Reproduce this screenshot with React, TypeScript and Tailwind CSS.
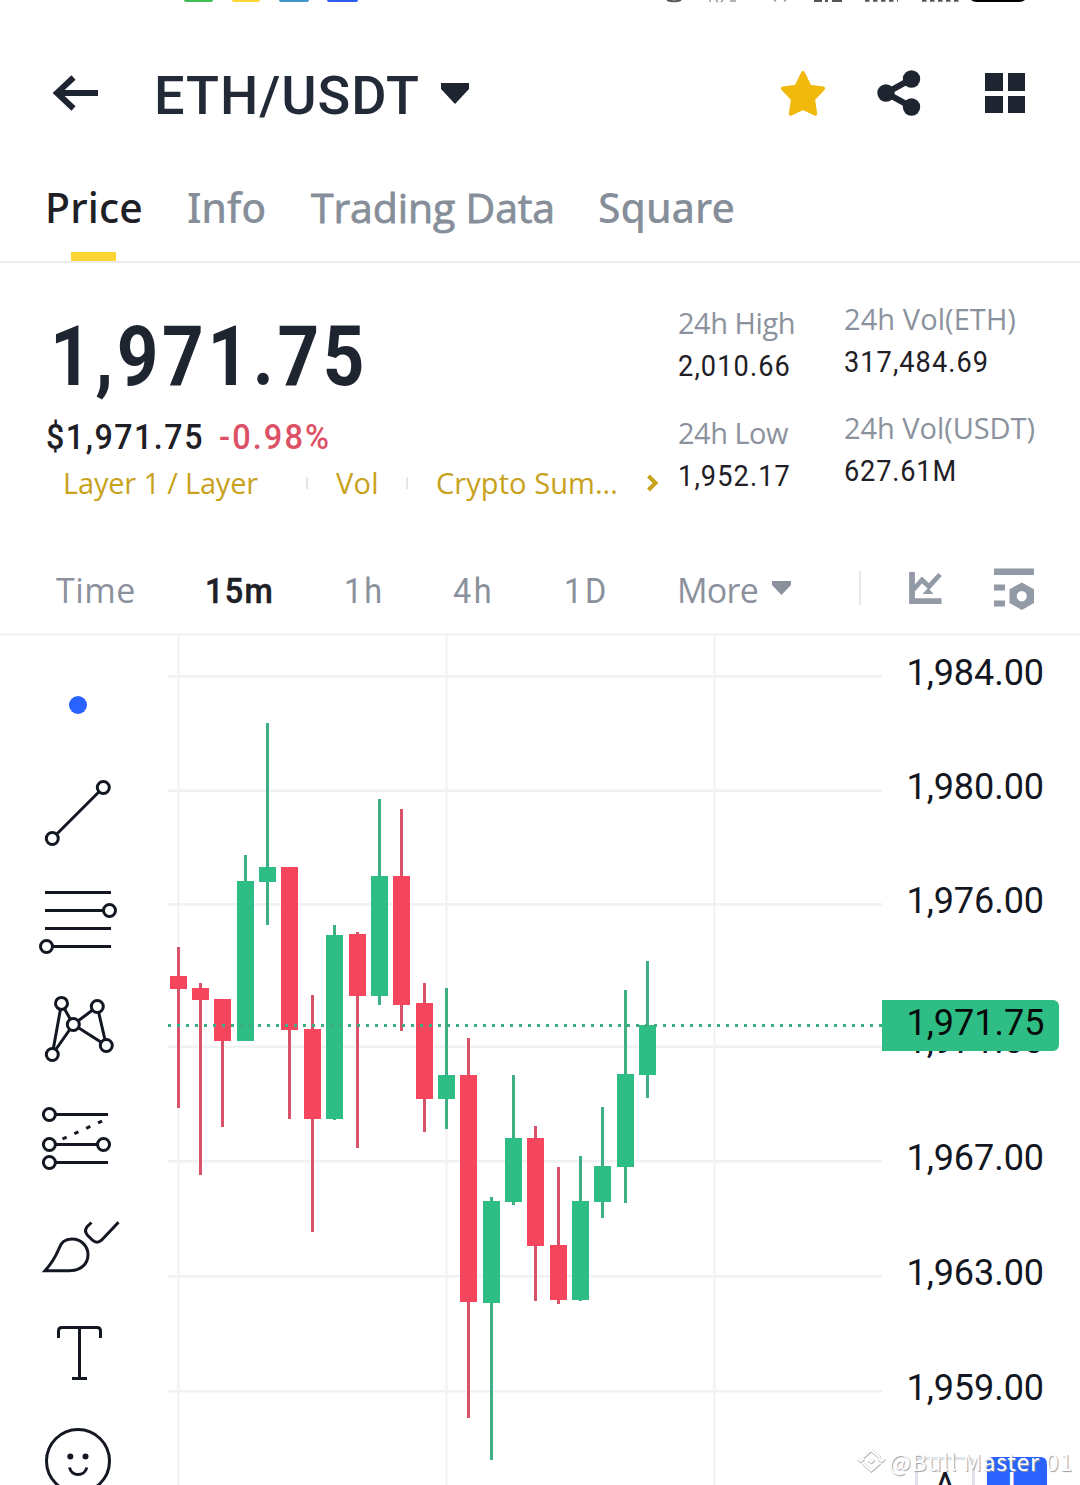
import { useLayoutEffect, useRef, useState } from "react";
import type { ReactNode } from "react";

type FitProps = { w: number; sx?: number; className?: string; children: string };

// Single line of text whose tracking is computed so that it fills a given width.
function Fit({ w, sx = 1, className = "", children }: FitProps) {
  const ref = useRef<HTMLSpanElement>(null);
  const [tracking, setTracking] = useState(0);
  useLayoutEffect(() => {
    const el = ref.current;
    if (!el) return;
    el.style.letterSpacing = "0px";
    const natural = el.getBoundingClientRect().width / sx;
    const next = (w / sx - natural) / children.length;
    el.style.letterSpacing = `${next}px`;
    setTracking(next);
  }, [w, sx, children]);
  return (
    <span className={`block shrink-0 whitespace-pre ${className}`} style={{ width: w }}>
      <span
        ref={ref}
        className="inline-block origin-left"
        style={{ letterSpacing: tracking, transform: sx === 1 ? undefined : `scaleX(${sx})` }}
      >
        {children}
      </span>
    </span>
  );
}

function StatusBar() {
  return (
    <div className="flex h-[3px] overflow-hidden">
      <div className="ml-[184px] h-[2px] w-[29px] rounded-b-[3px] bg-[#3fbf55]" />
      <div className="ml-[19px] h-[2px] w-[28px] rounded-b-[3px] bg-[#fdd835]" />
      <div className="ml-[19px] h-[2px] w-[30px] rounded-b-[3px] bg-[#3f97cb]" />
      <div className="ml-[18px] h-[2px] w-[31px] rounded-b-[3px] bg-[#2f5cf0]" />
      <svg className="ml-[302px]" width="372" height="3" viewBox="660 0 372 3">
        <path d="M667 0Q674 2.500 681 0" stroke="#55555c" strokeWidth="2" fill="none" />
        <path d="M710 0v2M716 0l2 2M723 0l-2 2M730 1h6M774 0l2 1M786 0l-2 1" stroke="#999" strokeWidth="1.5" />
        <path d="M814 1h8M825 1h3M832 1h10" stroke="#55555c" strokeWidth="2" />
        <path d="M865 .8h33M922 .8h38" stroke="#55555c" strokeWidth="2" strokeDasharray="4.500 3.500" />
        <path d="M971 0h54q-2 2-6 2h-42q-4 0-6-2z" fill="#000" />
      </svg>
    </div>
  );
}

function Header() {
  return (
    <header className="flex h-[180px] items-center text-[#1e2329]">
      <svg className="ml-[52px] shrink-0" width="47" height="38" viewBox="52 74 47 38">
        <path d="M73.500 77.500L57 93l16.500 15.500M57 93h41" fill="none" stroke="#1e2430" strokeWidth="6" />
      </svg>
      <Fit w={266} className="ml-[55px] mt-[6px] font-['Roboto'] text-[54px] font-medium leading-[60px] text-[#222a37]">
        ETH/USDT
      </Fit>
      <svg className="ml-[21px] mt-[1px] shrink-0" width="28" height="21" viewBox="0 0 28 21">
        <path d="M0 0h28v6L14 21 0 6z" fill="#1e2430" />
      </svg>
      <svg className="ml-[311px] shrink-0" width="46" height="46" viewBox="780 70.500 46 46">
        <path
          d="M803 73.500l6.700 13.800 13.300 1.700-10 10.500 2.200 14.700L803 108.500l-12.200 5.700L793 99.500 783 89l13.300-1.700z"
          fill="#f0b90b"
          stroke="#f0b90b"
          strokeWidth="4"
          strokeLinejoin="round"
        />
      </svg>
      <svg className="ml-[51px] shrink-0" width="44" height="46" viewBox="877 70 44 46">
        <path d="M911.500 79L886 93l25.500 14" fill="none" stroke="#1e2430" strokeWidth="6" />
        <g fill="#1e2430">
          <circle cx="911.500" cy="79" r="8.700" />
          <circle cx="886" cy="93" r="8.700" />
          <circle cx="911.500" cy="107" r="8.700" />
        </g>
      </svg>
      <div className="ml-[64px] grid h-[40px] w-[40px] grid-cols-2 gap-[5px]">
        <div className="bg-[#1e2430]" />
        <div className="bg-[#1e2430]" />
        <div className="bg-[#1e2430]" />
        <div className="bg-[#1e2430]" />
      </div>
    </header>
  );
}

function Tabs() {
  return (
    <nav className="flex h-[80px] border-b-2 border-[#ececee] font-['Noto_Sans'] text-[41px] font-medium leading-[48px] text-[#868e99]">
      <div className="ml-[44px] flex h-[78px] flex-col justify-between">
        <Fit w={98} className="pl-[1px] text-[#1e2026]">Price</Fit>
        <div className="ml-[27px] h-[9px] w-[45px] bg-[#fcd535]" />
      </div>
      <Fit w={79} className="ml-[45px]">Info</Fit>
      <Fit w={244} className="ml-[45px] font-['Open_Sans'] [-webkit-text-stroke:0.8px_#868e99]">Trading Data</Fit>
      <Fit w={137} className="ml-[43px]">Square</Fit>
    </nav>
  );
}

function Stat({ label, value, lw, vw }: { label: string; value: string; lw: number; vw: number }) {
  return (
    <div>
      <Fit w={lw} className="font-['Open_Sans'] text-[29px] leading-[43px] text-[#8c929d]">{label}</Fit>
      <Fit w={vw} sx={0.92} className="font-['Roboto'] text-[29.500px] leading-[45px] text-[#1e2026]">{value}</Fit>
    </div>
  );
}

function Summary() {
  return (
    <section className="flex h-[285px]">
      <div className="w-[678px] pt-[49px]">
        <Fit w={318} sx={0.87} className="ml-[50px] font-['Roboto'] text-[83.500px] font-bold leading-[90px] text-[#1e2530]">
          1,971.75
        </Fit>
        <div className="mt-[13px] flex font-['Roboto'] text-[35px] font-medium leading-[46px]">
          <Fit w={158} sx={0.92} className="ml-[46px] text-[#1e2026]">$1,971.75</Fit>
          <Fit w={112} sx={0.93} className="ml-[15px] text-[#dc5166]">-0.98%</Fit>
        </div>
        <div className="mt-[2px] flex h-[40px] items-center font-['Open_Sans'] text-[29px] leading-[40px] text-[#c8a21c]">
          <Fit w={195} className="ml-[63px]">Layer 1 / Layer</Fit>
          <div className="ml-[48px] h-[12px] w-[2px] bg-[#e6e6ea]" />
          <Fit w={43} className="ml-[28px]">Vol</Fit>
          <div className="ml-[27px] h-[12px] w-[2px] bg-[#e6e6ea]" />
          <Fit w={182} className="ml-[28px]">Crypto Sum...</Fit>
          <svg className="ml-[28px]" width="14" height="18" viewBox="0 0 14 18">
            <path d="M2.500 2l7 7-7 7" fill="none" stroke="#c8a21c" strokeWidth="4" />
          </svg>
        </div>
      </div>
      <div className="w-[166px] pt-[38px]">
        <Stat label="24h High" value="2,010.66" lw={117} vw={113} />
        <div className="h-[22px]" />
        <Stat label="24h Low" value="1,952.17" lw={110} vw={113} />
      </div>
      <div className="pt-[34px]">
        <Stat label="24h Vol(ETH)" value="317,484.69" lw={172} vw={145} />
        <div className="h-[21px]" />
        <Stat label="24h Vol(USDT)" value="627.61M" lw={191} vw={113} />
      </div>
    </section>
  );
}

function Intervals() {
  return (
    <div className="flex h-[88px] items-center border-b-[3px] border-[#f3f4f5] font-['Roboto'] text-[34.500px] leading-[44px] text-[#8a919c]">
      <Fit w={80} className="ml-[56px] -mt-[2px] font-['Open_Sans'] text-[34px]">Time</Fit>
      <Fit w={69} sx={0.94} className="ml-[69px] font-medium text-[#1e2026] [-webkit-text-stroke:0.5px_#1e2026]">15m</Fit>
      <Fit w={40} sx={0.94} className="ml-[70px]">1h</Fit>
      <Fit w={41} sx={0.94} className="ml-[69px]">4h</Fit>
      <Fit w={45} sx={0.94} className="ml-[70px]">1D</Fit>
      <Fit w={81} className="ml-[68px] -mt-[2px] font-['Open_Sans'] text-[34px]">More</Fit>
      <svg className="ml-[14px] -mt-[5px]" width="19" height="14" viewBox="0 0 19 14">
        <path d="M0 0h19v4L9.500 14 0 4z" fill="#8a919c" />
      </svg>
      <div className="ml-[68px] -mt-[6px] h-[34px] w-[2px] bg-[#e6e7ea]" />
      <svg className="ml-[47px] -mt-[6px]" width="34" height="34" viewBox="908 571 34 34">
        <path d="M912 572v29.200h29.500" fill="none" stroke="#929aa5" strokeWidth="5.800" />
        <path d="M913.500 589.500l8.500-9.500 7 6.500L940 574.500" fill="none" stroke="#929aa5" strokeWidth="4.800" />
        <path d="M928 588l5.500 6h-11z" fill="#929aa5" />
      </svg>
      <svg className="ml-[51px] -mt-[3px]" width="42" height="43" viewBox="993 568 42 43">
        <path d="M994 568.500h40v6.500h-40zM994 584.500h11v6h-11zM994 600.500h11v6h-11z" fill="#929aa5" />
        <path
          fillRule="evenodd"
          d="M1021.800 582.500l12.200 6.800v13.700l-12.200 7-12.300-7v-13.700zM1021.800 591a5 5.200 0 1 0 .01 0z"
          fill="#929aa5"
        />
      </svg>
    </div>
  );
}

// Slice of the drawing toolbar: spans the vertical range [y, y + h).
function Tool({ y, h, children }: { y: number; h: number; children: ReactNode }) {
  return (
    <svg
      className="block shrink-0"
      width="168"
      height={h}
      viewBox={`0 ${y} 168 ${h}`}
      fill="none"
      stroke="#131722"
      strokeWidth="3"
    >
      {children}
    </svg>
  );
}

function Knob({ x, y }: { x: number; y: number }) {
  return <circle cx={x} cy={y} r="6" fill="#fff" />;
}

function Toolbar() {
  return (
    <aside className="flex w-[168px] shrink-0 flex-col">
      <Tool y={636} h={114}>
        <circle cx="78" cy="705" r="9" fill="#2962ff" stroke="none" />
      </Tool>
      <Tool y={750} h={115}>
        <path d="M52.300 838.500l51-51" />
        <Knob x={103.3} y={787.5} />
        <Knob x={52.3} y={838.5} />
      </Tool>
      <Tool y={865} h={110}>
        <path d="M45 892.500h66M45 910.500h60M45 928.500h66M50 946.500h61" />
        <Knob x={109.5} y={910.5} />
        <Knob x={46.5} y={946.5} />
      </Tool>
      <Tool y={975} h={110}>
        <path d="M52.300 1054.500l9.200-51 11.800 21zM97.300 1006.500l-24 18 33 21z" />
        <Knob x={61.5} y={1003.4} />
        <Knob x={97.3} y={1006.5} />
        <Knob x={73.3} y={1024.5} />
        <Knob x={52.3} y={1054.5} />
        <Knob x={106.3} y={1045.5} />
      </Tool>
      <Tool y={1085} h={110}>
        <path d="M49 1114.500h59M49 1144.500h54M49 1162.500h59" />
        <path d="M62.500 1139l43-19.500" strokeDasharray="4.500 8.500" />
        <Knob x={49.4} y={1114.5} />
        <Knob x={49.4} y={1144.5} />
        <Knob x={103.5} y={1144.5} />
        <Knob x={49.4} y={1162.5} />
      </Tool>
      <Tool y={1195} h={105}>
        <path d="M45 1270.800C51 1264 56 1256 59 1248.500 61 1242 66 1239 72 1239c9 0 16 7 16 15.500 0 9.500-7 16.300-19 16.300z" />
        <path d="M91.500 1222.500l-4 3.700q-4 4.500 0 9l5 5q4.500 4 9 0l17-18" />
      </Tool>
      <Tool y={1300} h={105}>
        <path d="M58.500 1338v-7q0-3.500 3.500-3.500h35q3.500 0 3.500 3.500v7M79.500 1327.500v51M72 1378.500h15" />
      </Tool>
      <Tool y={1405} h={80}>
        <circle cx="78" cy="1461" r="31.500" />
        <circle cx="70.300" cy="1456.500" r="3" fill="#131722" stroke="none" />
        <circle cx="85.500" cy="1456.500" r="3" fill="#131722" stroke="none" />
        <path d="M69.500 1467.500c2 9.300 15 9.300 17.300 0" />
      </Tool>
    </aside>
  );
}

// [left, body top, body bottom, wick top, wick bottom, rising]
const candles: [number, number, number, number, number, boolean][] = [
  [170, 976, 989, 947, 1108, false],
  [192, 988, 1000, 983, 1175, false],
  [214, 999, 1041, 999, 1127, false],
  [237, 881, 1041, 855, 1041, true],
  [259, 867, 882, 723, 925, true],
  [281, 867, 1030, 867, 1119, false],
  [304, 1029, 1119, 995, 1232, false],
  [326, 935, 1119, 925, 1120, true],
  [349, 934, 996, 932, 1148, false],
  [371, 876, 996, 799, 1005, true],
  [393, 876, 1005, 809, 1031, false],
  [416, 1003, 1099, 983, 1132, false],
  [438, 1075, 1099, 988, 1129, true],
  [460, 1075, 1302, 1038, 1418, false],
  [483, 1201, 1303, 1197, 1460, true],
  [505, 1138, 1202, 1075, 1205, true],
  [527, 1138, 1246, 1126, 1301, false],
  [550, 1245, 1300, 1167, 1304, false],
  [572, 1201, 1300, 1156, 1301, true],
  [594, 1166, 1202, 1107, 1218, true],
  [617, 1074, 1167, 990, 1203, true],
  [639, 1025, 1075, 961, 1098, true],
];

const gridRows = [675, 789.5, 903, 1045.5, 1160, 1275, 1390];
const gridColumns = [177.5, 445.5, 713.5];

function Candles() {
  return (
    <svg className="block shrink-0" width="714" height="849" viewBox="168 636 714 849">
      {gridRows.map((y) => (
        <rect key={y} x="168" y={y} width="714" height="2.500" fill="#eff1f2" />
      ))}
      {gridColumns.map((x) => (
        <rect key={x} x={x} y="636" width="2" height="849" fill="#eff1f2" />
      ))}
      {candles.map(([x, top, bottom, high, low, up]) => (
        <g key={x}>
          <rect x={x + 7} y={high} width="3" height={low - high} fill={up ? "#3fae83" : "#d8536a"} />
          <rect x={x} y={top} width="17" height={bottom - top} fill={up ? "#2ebd85" : "#f6465d"} />
        </g>
      ))}
      <path d="M168 1025.500h714" stroke="#3fab82" strokeWidth="3" strokeDasharray="3 6" />
    </svg>
  );
}

function Watermark() {
  return (
    <div className="absolute bottom-[8px] right-[7px] flex items-center gap-[3px]">
      <svg width="29" height="24" viewBox="0 0 29 24" fill="none">
        <g stroke="#b4b7bd" strokeWidth="3.200">
          <path d="M6 9l8.500-7.500L23 9M6 14.500l8.500 7.500 8.500-7.500M11.500 11l3 2.500 3-2.500M1 10l3 2.700L7 10M22 10l3 2.700 3-2.700" />
        </g>
        <g stroke="#fff" strokeWidth="2.200" transform="translate(-.4 -.6)">
          <path d="M6 9l8.500-7.500L23 9M6 14.500l8.500 7.500 8.500-7.500M11.500 11l3 2.500 3-2.500M1 10l3 2.700L7 10M22 10l3 2.700 3-2.700" />
        </g>
      </svg>
      <Fit
        w={184}
        className="font-['Noto_Sans_CJK_SC'] text-[23px] leading-[32px] text-white [text-shadow:1px_1px_1px_#9a9da5]"
      >
        @Bull Master 01
      </Fit>
    </div>
  );
}

function PriceAxis() {
  return (
    <div className="relative w-[198px] font-['Roboto'] text-[36px] leading-[40px] text-[#131722]">
      <div className="ml-[24.500px] pt-[17px]">
        <Fit w={137.5}>1,984.00</Fit>
        <Fit w={137.5} className="mt-[74px]">1,980.00</Fit>
        <Fit w={137.5} className="mt-[74px]">1,976.00</Fit>
        <Fit w={137.5} className="mt-[100px]">1,971.00</Fit>
        <Fit w={137.5} className="mt-[77px]">1,967.00</Fit>
        <Fit w={137.5} className="mt-[75px]">1,963.00</Fit>
        <Fit w={137.5} className="mt-[75px]">1,959.00</Fit>
      </div>
      <div className="absolute left-0 top-[364px] h-[51px] w-[177px] rounded-r-[6px] bg-[#2ebd85] pl-[24.500px] pt-[3px] text-[#060b0a]">
        <Fit w={138}>1,971.75</Fit>
      </div>
      <div className="ml-[33px] mt-[49px] flex h-[28px] gap-[12px] overflow-hidden text-[36px] leading-[52px]">
        <div className="h-[60px] w-[60px] rounded-[6px] border-[3px] border-[#e0e3eb] text-center">A</div>
        <div className="h-[60px] w-[60px] rounded-[6px] bg-[#2962ff] pl-[20px] pt-[3px] text-white">L</div>
      </div>
      <Watermark />
    </div>
  );
}

export default function App() {
  return (
    <div className="h-[1485px] w-[1080px] overflow-hidden bg-white">
      <StatusBar />
      <Header />
      <Tabs />
      <Summary />
      <Intervals />
      <main className="flex h-[849px] overflow-hidden">
        <Toolbar />
        <Candles />
        <PriceAxis />
      </main>
    </div>
  );
}
